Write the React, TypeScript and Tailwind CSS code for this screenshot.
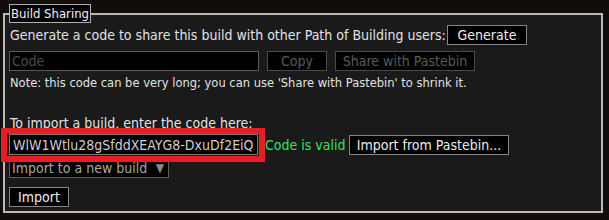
import React from 'react'

const font = { fontFamily: '"DejaVu Sans Condensed", "DejaVu Sans", sans-serif' }

function Btn({ children, className = '', disabled = false }: { children: React.ReactNode; className?: string; disabled?: boolean }) {
  return (
    <div
      className={
        'flex h-[20px] items-center justify-center whitespace-nowrap border bg-black text-[14px] leading-none ' +
        (disabled ? 'border-[#4a4a4a] text-[#5a5a5a] ' : 'border-[#858585] text-[#ececec] ') +
        className
      }
    >
      {children}
    </div>
  )
}

export default function App() {
  return (
    <div className="relative h-[220px] w-[609px] overflow-hidden bg-[#110d0a] px-[3px] pt-[13px]" style={font}>
      <div className="h-[200px] w-[600px] border-2 border-[#b9b9b9] bg-[#1a1a1a] pl-[4px] pt-[10px] text-[#e2e2e2]">
        {/* generate row */}
        <div className="flex h-[20px] items-center">
          <span className="ml-px w-[437px] whitespace-nowrap text-[14px] leading-none">
            Generate a code to share this build with other Path of Building users:
          </span>
          <Btn className="w-[80px]">Generate</Btn>
        </div>

        <div className="mt-[6px] flex h-[20px] gap-[8px]">
          <div className="flex w-[250px] items-center border border-[#5a5a5a] bg-black pl-[2px] text-[14px] leading-none text-[#4c4c4c]">
            Code
          </div>
          <Btn disabled className="w-[60px]">Copy</Btn>
          <Btn disabled className="w-[140px]">Share with Pastebin</Btn>
        </div>

        <div className="ml-px mt-[4px] h-[16px] whitespace-nowrap font-['DejaVu_Sans',sans-serif] text-[11.5px] leading-[16px]">
          Note: this code can be very long; you can use 'Share with Pastebin' to shrink it.
        </div>

        <div className="ml-px mt-[24px] h-[16px] whitespace-nowrap text-[14px] leading-[16px]">To import a build, enter the code here:</div>

        <div className="mt-[3px] flex h-[21px] items-center">
          <div className="flex h-[21px] w-[249px] items-center whitespace-nowrap border border-[#7a7a7a] bg-black pl-[3px] text-[14px] leading-none text-[#cfcfcf]">
            WlW1Wtlu28gSfddXEAYG8-DxuDf2EiQ
          </div>
          <span className="ml-[7px] w-[84px] whitespace-nowrap text-[14px] leading-none text-[#3ae05a]">Code is valid</span>
          <Btn className="w-[160px]">Import from Pastebin...</Btn>
        </div>

        <div className="mt-[3px] flex h-[20px] w-[160px] items-center justify-between whitespace-nowrap border border-[#5e5e5e] bg-black pl-[2px] pr-[4px] text-[14px] leading-none text-[#a8a8a8]">
          <span>Import to a new build</span>
          <span className="text-[12px] text-[#8a8a8a]">▼</span>
        </div>

        <Btn className="mt-[9px] w-[60px]">Import</Btn>
      </div>

      {/* section title sitting on the border */}
      <div className="absolute left-[9px] top-[4px] flex h-[19px] w-[82px] items-center justify-center whitespace-nowrap border border-[#b0b0b0] bg-black text-[13px] leading-none text-[#f2f2f2]">
        Build Sharing
      </div>

      {/* red highlight annotation */}
      <div className="absolute left-[1px] top-[128px] h-[34px] w-[264px] border-[6px] border-[#e51e27]" />
    </div>
  )
}
